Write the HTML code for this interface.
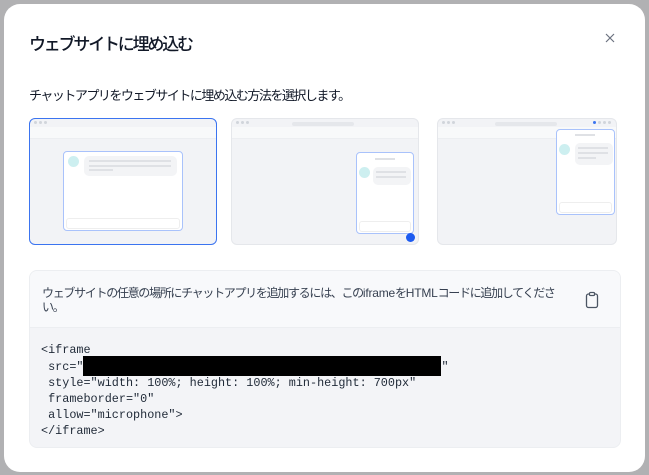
<!DOCTYPE html>
<html><head><meta charset="utf-8"><style>
*{box-sizing:border-box;margin:0;padding:0}
body{width:649px;height:475px;background:#b1b1b3;font-family:"Liberation Sans","Noto Sans CJK JP",sans-serif;position:relative;overflow:hidden}
.modal{position:absolute;left:4px;top:4px;width:641px;height:468px;background:#fff;border-radius:16px}
.t{position:absolute;left:29px;top:30px;font-size:17px;color:#111827;font-weight:500;letter-spacing:-2.2px}
.x{position:absolute;left:603px;top:31px;width:14px;height:14px}
.sub{position:absolute;left:29px;top:85px;font-size:13px;color:#111827;letter-spacing:-1.5px}
.card{position:absolute;top:118px;height:127px;background:#f2f3f6;border:1px solid #e5e7eb;border-radius:6px;overflow:hidden}
.dots{position:absolute;left:4px;top:2px;font-size:0}
.dots i{display:inline-block;width:3px;height:3px;border-radius:50%;background:#d1d5db;margin-right:2px}
.nav{position:absolute;left:0;right:0;top:8px;height:12px;background:#f8f9fa;border-bottom:1px solid #eceef1}
.win{position:absolute;background:#fff;border:1px solid #a9c2fb;border-radius:4px}
.bub{position:absolute;background:#f3f4f6;border-radius:5px}
.ln{position:absolute;height:2px;background:#dfe1e5}
.av{position:absolute;width:11px;height:11px;border-radius:50%;background:#cdeff0}
.box{position:absolute;left:29px;top:270px;width:592px;height:178px;border:1px solid #eceef1;border-radius:8px;background:#f3f4f7;overflow:hidden}
.bh{height:57px;background:#f8f9fb;border-bottom:1px solid #eceef1;padding:15px 0 0 12px;font-size:12px;line-height:14px;color:#374151;letter-spacing:-1.3px;white-space:nowrap}
.bh span{letter-spacing:-0.2px}
pre{position:absolute;left:11px;top:71px;font-family:"Liberation Mono",monospace;font-size:11.8px;line-height:16px;color:#1f2937}
.red{display:inline-block;width:354px;height:16px;background:#000;vertical-align:-4px;box-shadow:0 0 0 2px #000;margin:0 2px}
</style></head><body>
<div class="modal"></div>
<div class="t">ウェブサイトに埋め込む</div>
<svg class="x" viewBox="0 0 14 14"><path d="M3 3L11 11M11 3L3 11" stroke="#6b7280" stroke-width="1.2"/></svg>
<div class="sub">チャットアプリをウェブサイトに埋め込む方法を選択します。</div>

<div class="card" style="left:29px;width:188px;border:1.5px solid #3b74f0">
 <div class="dots"><i></i><i></i><i></i></div>
 <div class="nav"></div>
 <div class="win" style="left:33px;top:32px;width:120px;height:80px">
  <div class="av" style="left:4px;top:4px"></div>
  <div class="bub" style="left:20px;top:4px;width:93px;height:20px"></div>
  <div class="ln" style="left:25px;top:8px;width:82px"></div>
  <div class="ln" style="left:25px;top:13px;width:82px"></div>
  <div class="ln" style="left:25px;top:17px;width:24px"></div>
  <div style="position:absolute;left:2px;right:2px;top:66px;height:11px;border:1px solid #eee;border-radius:3px"></div>
 </div>
</div>

<div class="card" style="left:231px;width:188px">
 <div class="dots"><i></i><i></i><i></i></div>
 <div style="position:absolute;left:60px;top:3px;width:62px;height:4px;background:#e5e7eb;border-radius:2px"></div>
 <div class="nav"></div>
 <div class="win" style="left:124px;top:33px;width:58px;height:82px">
  <div class="ln" style="left:18px;top:5px;width:20px"></div>
  <div class="av" style="left:2px;top:14px"></div>
  <div class="bub" style="left:16px;top:14px;width:38px;height:18px"></div>
  <div class="ln" style="left:19px;top:18px;width:30px"></div>
  <div class="ln" style="left:19px;top:23px;width:30px"></div>
  <div style="position:absolute;left:2px;right:2px;top:68px;height:11px;border:1px solid #eee;border-radius:3px"></div>
 </div>
 <div style="position:absolute;left:174px;top:114px;width:9px;height:9px;border-radius:50%;background:#1d5bf0"></div>
</div>

<div class="card" style="left:437px;width:180px">
 <div class="dots"><i></i><i></i><i></i></div>
 <div style="position:absolute;left:57px;top:3px;width:62px;height:4px;background:#e5e7eb;border-radius:2px"></div>
 <div style="position:absolute;left:155px;top:2px;font-size:0"><i style="display:inline-block;width:3px;height:3px;border-radius:50%;background:#3b74f0;margin-right:2px"></i><i style="display:inline-block;width:3px;height:3px;border-radius:50%;background:#d1d5db;margin-right:2px"></i><i style="display:inline-block;width:3px;height:3px;border-radius:50%;background:#d1d5db;margin-right:2px"></i><i style="display:inline-block;width:3px;height:3px;border-radius:50%;background:#d1d5db"></i></div>
 <div class="nav"></div>
 <div class="win" style="left:118px;top:10px;width:59px;height:86px">
  <div class="ln" style="left:18px;top:4px;width:20px"></div>
  <div class="av" style="left:2px;top:14px"></div>
  <div class="bub" style="left:18px;top:13px;width:38px;height:22px"></div>
  <div class="ln" style="left:21px;top:17px;width:30px"></div>
  <div class="ln" style="left:21px;top:22px;width:30px"></div>
  <div class="ln" style="left:21px;top:27px;width:18px"></div>
  <div style="position:absolute;left:2px;right:2px;top:72px;height:11px;border:1px solid #eee;border-radius:3px"></div>
 </div>
</div>

<div class="box">
 <div class="bh">ウェブサイトの任意の場所にチャットアプリを追加するには、この<span>iframe</span>を<span>HTML</span>コードに追加してくださ<br>い。</div>
 <svg style="position:absolute;left:555px;top:20px" width="14" height="18" viewBox="0 0 14 18"><rect x="1.5" y="3" width="11" height="13.5" rx="2" fill="none" stroke="#4b5563" stroke-width="1.3"/><rect x="4.5" y="1.5" width="5" height="3" rx="1" fill="#fff" stroke="#4b5563" stroke-width="1.2"/></svg>
<pre>&lt;iframe
 src="<span class="red"></span>"
 style="width: 100%; height: 100%; min-height: 700px"
 frameborder="0"
 allow="microphone"&gt;
&lt;/iframe&gt;</pre>
</div>
</body></html>
